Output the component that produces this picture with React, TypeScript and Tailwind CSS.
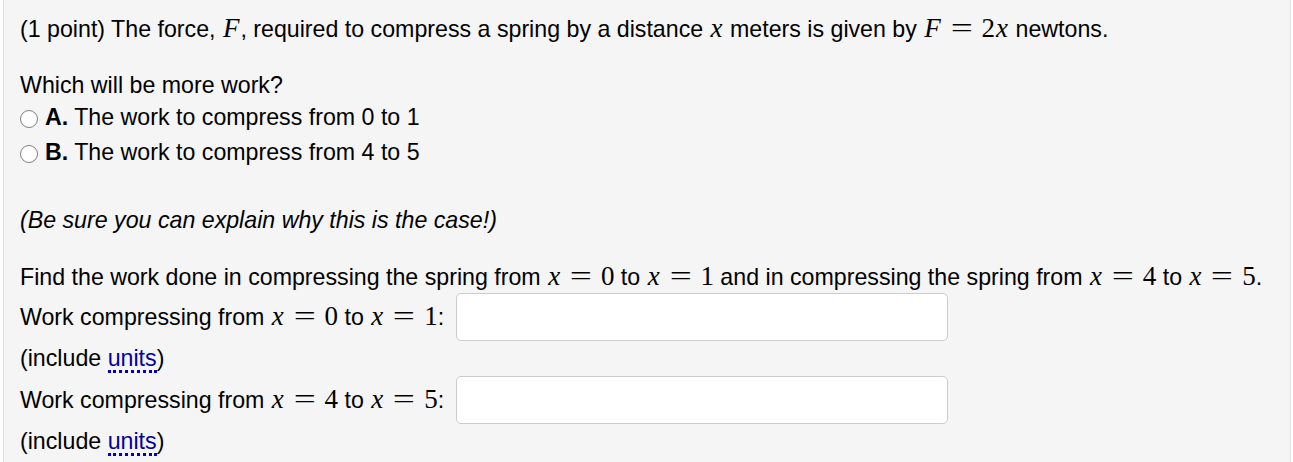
import React from 'react';

const M: React.FC<{ children: React.ReactNode; i?: boolean }> = ({ children, i }) => (
  <span className={`font-['Liberation_Serif',serif] text-[27px] ${i ? 'italic mx-[1px]' : ''}`}>{children}</span>
);

const EqSign: React.FC = () => (
  <span className="inline-block font-['Liberation_Serif',serif] text-[28px] mx-[12px] scale-x-[1.4]">=</span>
);

const Eq: React.FC<{ l: string; r: string }> = ({ l, r }) => (
  <span className="whitespace-nowrap">
    <M i>{l}</M>
    <EqSign />
    <M>{r}</M>
  </span>
);

const Radio: React.FC = () => (
  <span className="inline-block w-[18px] h-[18px] rounded-full border-[1.5px] border-[#808080] bg-white mr-[7px] translate-y-[3px]" />
);

const Units: React.FC = () => (
  <span className="text-[#0000a0] border-b-[3px] border-dotted border-[#0000c0] leading-[24px] inline-block">units</span>
);

const Line: React.FC<{ className?: string; children: React.ReactNode }> = ({ className = '', children }) => (
  <div className={`h-[32px] leading-[32px] whitespace-nowrap ${className}`}>{children}</div>
);

const Field: React.FC<{ a: string; b: string; className?: string }> = ({ a, b, className = '' }) => (
  <div className={`flex items-center h-[48px] whitespace-nowrap ${className}`}>
    <span className="-translate-y-[1px]">
      Work compressing from <Eq l="x" r={a} /> to <Eq l="x" r={b} />:
    </span>
    <input className="ml-[12px] w-[492px] h-[48px] bg-white border border-[#cccccc] rounded-[5px] outline-none" />
  </div>
);

export default function App() {
  return (
    <div className="w-[1293px] h-[462px] bg-white pl-[3px] pr-[2px] overflow-hidden">
      <div className="h-full bg-[#f5f5f5] border-l border-r border-[#e2e2e2] pl-[16px] pt-[12px] font-['Liberation_Sans',Arial,sans-serif] text-[23.2px] text-black">
        <Line>
          (1 point) The force, <M i>F</M>, required to compress a spring by a distance <M i>x</M> meters is given by{' '}
          <span className="whitespace-nowrap">
            <M i>F</M>
            <EqSign />
            <M>2</M>
            <M i>x</M>
          </span>{' '}
          newtons.
        </Line>
        <Line className="mt-[25px]">Which will be more work?</Line>
        <Line>
          <Radio />
          <b>A.</b> The work to compress from 0 to 1
        </Line>
        <Line className="mt-[3px]">
          <Radio />
          <b>B.</b> The work to compress from 4 to 5
        </Line>
        <Line className="mt-[36px] italic">(Be sure you can explain why this is the case!)</Line>
        <Line className="mt-[24px]">
          Find the work done in compressing the spring from <Eq l="x" r="0" /> to <Eq l="x" r="1" /> and in compressing the spring from <Eq l="x" r="4" /> to <Eq l="x" r="5" />.
        </Line>
        <Field a="0" b="1" className="mt-[1px]" />
        <Line className="mt-[1px]">
          (include <Units />)
        </Line>
        <Field a="4" b="5" className="mt-[2px]" />
        <Line className="mt-[1px]">
          (include <Units />)
        </Line>
      </div>
    </div>
  );
}
